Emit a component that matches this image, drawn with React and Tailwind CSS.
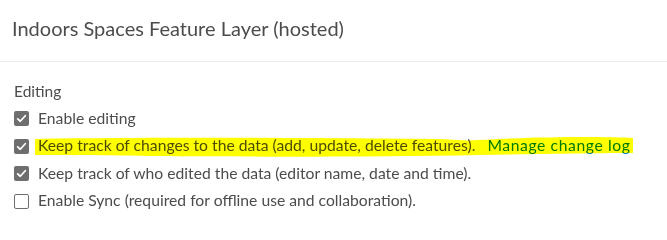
import React from 'react'

const ROWS = [
  { id: 'editing', label: 'Enable editing', checked: true },
  { id: 'changes', label: 'Keep track of changes to the data (add, update, delete features).', checked: true, link: 'Manage change log' },
  { id: 'editor', label: 'Keep track of who edited the data (editor name, date and time).', checked: true },
  { id: 'sync', label: 'Enable Sync (required for offline use and collaboration).', checked: false },
]

function Checkbox({ checked }) {
  if (!checked) {
    return <span className="w-[15px] h-[15px] shrink-0 rounded-[2px] border border-[#6e6e6e] bg-white" />
  }
  return (
    <span className="w-[15px] h-[15px] shrink-0 rounded-[2px] bg-[#6e6e6e] flex items-center justify-center">
      <svg viewBox="0 0 16 16" className="w-[11px] h-[11px]">
        <path d="M2.5 8.5 L6.2 12 L13.5 4" fill="none" stroke="white" strokeWidth="2.6" strokeLinecap="round" strokeLinejoin="round" />
      </svg>
    </span>
  )
}

export default function App() {
  return (
    <div className="relative w-[667px] h-[223px] bg-white font-['Lato',sans-serif] text-[#4c4c4c] overflow-hidden">
      <div className="h-[62px] px-3 flex items-center border-b border-[#ebebeb]">
        <h1 className="text-[20px] leading-none pb-[6px]">Indoors Spaces Feature Layer (hosted)</h1>
      </div>

      <div className="px-[14px] pt-[19px]">
        <p className="text-[15.5px] leading-[20px]">Editing</p>
        <ul className="mt-[4px] flex flex-col">
          {ROWS.map((row) => (
            <li key={row.id} className="h-[27.5px] flex items-center gap-[9px] text-[15.7px]">
              <Checkbox checked={row.checked} />
              <span className="whitespace-nowrap">
                {row.label}
                {row.link && <a className="ml-[12px] text-[#0079c1] tracking-[0.6px]">{row.link}</a>}
              </span>
            </li>
          ))}
        </ul>
      </div>

      {/* marker highlight */}
      <svg className="absolute left-0 top-0 pointer-events-none mix-blend-multiply" width="667" height="223">
        <path
          d="M35 139 C150 137 300 138 440 139 C460 140 470 141 478 140 C530 137 600 136 633 138 L633 153 C600 153 540 154 480 155 C380 157 250 157 150 156 C90 155 60 155 35 155 Z"
          fill="#ffff00"
        />
      </svg>
    </div>
  )
}
